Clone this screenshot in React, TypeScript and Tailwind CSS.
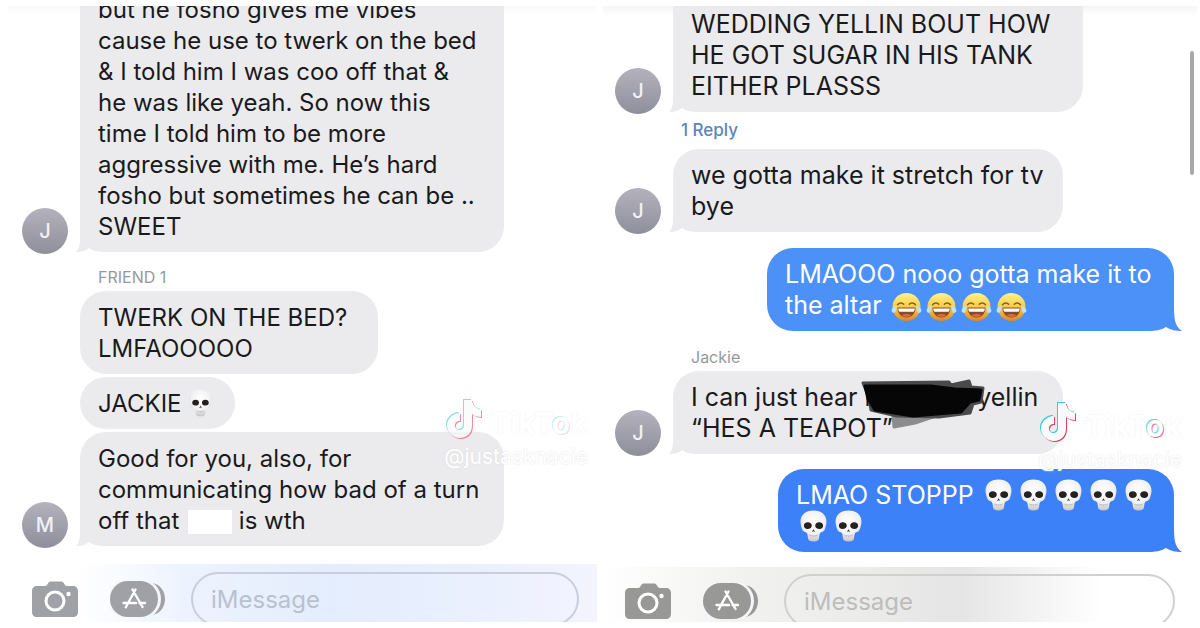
import type { ReactNode } from "react";

type IconProps = { className?: string };

function Skull({ className = "mx-[3px] h-8 w-[29px]" }: IconProps) {
  return (
    <svg viewBox="0 0 29 32" role="img" aria-label="skull" className={`-mt-2.5 -mb-1.5 inline-block align-middle ${className}`}>
      <defs>
        <radialGradient id="bone" cx="50%" cy="35%" r="65%">
          <stop offset="0" stopColor="#ffffff" />
          <stop offset="0.65" stopColor="#f1f1f3" />
          <stop offset="1" stopColor="#c3c4ca" />
        </radialGradient>
      </defs>
      <path
        d="M14.500 0.500C6.500.500 1.500 5 1.500 11.500c0 3 .8 4.800 1.200 6.500.5 2 1.300 3.300 3 3.900 1.700.5 2.400.9 2.700 2.400l.7 4.400c.3 1.700 1.700 2.800 5.400 2.800s5.100-1.100 5.400-2.800l.7-4.400c.3-1.500 1-1.900 2.700-2.400 1.700-.6 2.500-1.900 3-3.900.4-1.700 1.200-3.500 1.200-6.500 0-6.500-5-11-13-11Z"
        fill="url(#bone)"
      />
      <path d="M8.800 12.300c-2.500 0-3.900 1.500-3.900 3.500s1.300 3.200 3.600 3.200c2.600 0 4.300-1.100 4.300-3.400 0-2-1.500-3.300-4-3.300ZM20.200 12.300c2.500 0 3.900 1.500 3.900 3.500s-1.300 3.200-3.600 3.200c-2.600 0-4.300-1.100-4.300-3.400 0-2 1.500-3.300 4-3.300Z" fill="#25211f" />
      <path d="m14.500 19.300-1.600 2.600 1.600-.6 1.600.6Z" fill="#3b3230" />
      <path d="M10 25c2.800 1.100 6.200 1.100 9 0M12.200 25.600v1.600M14.500 26v1.600M16.800 25.600v1.600" fill="none" stroke="#b9b5b7" strokeWidth="0.7" />
    </svg>
  );
}

function Joy() {
  return (
    <svg viewBox="0 0 31 30" role="img" aria-label="tears of joy" className="-my-2 mx-0.5 inline-block h-[30px] w-[31px] align-middle">
      <defs>
        <linearGradient id="face" x1="0" y1="0" x2="0" y2="1">
          <stop offset="0" stopColor="#fff48a" />
          <stop offset="0.5" stopColor="#fbcb45" />
          <stop offset="1" stopColor="#dc8628" />
        </linearGradient>
      </defs>
      <circle cx="15.500" cy="15" r="14" fill="url(#face)" />
      <path d="M6.500 12.800c1.300-2.300 4.700-2.500 6.200-.6M18.300 12.200c1.500-1.900 4.900-1.700 6.200.6" fill="none" stroke="#8a5a22" strokeWidth="1.500" strokeLinecap="round" />
      <path d="M6.500 15.500h18c0 6-3.800 10-9 10s-9-4-9-10Z" fill="#8a4c22" />
      <path d="M7.300 16.500h16.400c0 1.800-.5 2.700-1.200 3.300h-14c-.7-.6-1.200-1.500-1.200-3.300Z" fill="#fff" />
      <path d="M10.500 23.200c3-1.600 7-1.600 10 0-3 2.300-7 2.300-10 0Z" fill="#d9694a" />
      <path d="M5.500 13.700C3.500 14 .6 16 .6 18.800c0 2 3 2.700 4 .7.7-1.400.9-3.700.9-5.800ZM25.500 13.700c2 .3 4.900 2.300 4.900 5.100 0 2-3 2.700-4 .7-.7-1.400-.9-3.700-.9-5.800Z" fill="#b9e4f8" />
    </svg>
  );
}

function Camera() {
  return (
    <svg viewBox="0 0 46 36" className="h-9 w-[46px]" aria-hidden="true">
      <path d="M5 5h8c1.500 0 2-.8 2.800-2.200C16.800 1 17.500.500 19.500.500h9c2 0 2.700.5 3.700 2.300C33 4.200 33.500 5 35 5h6c3 0 5 2 5 5v21c0 3-2 5-5 5H5c-3 0-5-2-5-5V10c0-3 2-5 5-5Z" fill="currentColor" />
      <circle cx="23" cy="20" r="9" fill="none" stroke="#fff" strokeWidth="3" />
      <circle cx="36.500" cy="13" r="2.200" fill="#fff" />
    </svg>
  );
}

function AppStore() {
  return (
    <svg viewBox="0 0 56 36" className="h-9 w-14" aria-hidden="true">
      <path d="M42 2c8 1 13 8 13 16s-5 15-13 16Z" fill="currentColor" />
      <rect x="-2" y="-2" width="53" height="40" rx="20" fill="#f4f6fa" />
      <rect width="48" height="36" rx="18" fill="currentColor" />
      <path d="m25.500 8.500-8.500 15.500M22.500 8.500l10 17.500M13.500 22h12.500M29.500 22h5.500M15.800 26.300l.8-1.400" fill="none" stroke="#fff" strokeWidth="2.400" strokeLinecap="round" />
    </svg>
  );
}

const NOTE =
  "M18 1h8c.5 5 4 9 9 9.500v7.500c-3.500 0-6.500-1-9-3V26c0 8-5 13-12 13S1 33 1 26.500 7 14 14 14v8c-3.500 0-5 2-5 4.500s2 4.500 4.500 4.500 4.500-2 4.500-5Z";

function Watermark({ className, faint }: { className: string; faint?: boolean }) {
  return (
    <div className={`pointer-events-none absolute flex flex-col gap-0.5 ${className}`}>
      <div className="flex items-end gap-2 pl-0.5">
        <svg viewBox="0 0 36 40" className={`h-10 w-9 overflow-visible ${faint ? "opacity-60" : ""}`} aria-hidden="true">
          <path d={NOTE} fill="#35cdd0" transform="translate(-1 -1)" />
          <path d={NOTE} fill="#e0425f" transform="translate(1 1)" />
          <path d={NOTE} fill="#fafafa" />
        </svg>
        <span className="text-3xl leading-8 font-bold text-white [text-shadow:0_0_2px_#ededed]">
          TikT
          <span className={faint ? "[text-shadow:-1px_-1px_0_#c5eeee,1px_1px_0_#eedde0]" : "[text-shadow:-1px_-1px_0_#58d5d6,1px_1px_0_#e2728a]"}>o</span>k
        </span>
      </div>
      <span className="text-[21px] leading-8 text-white [text-shadow:0_0_2px_#dcdcdc]">@justasknacie</span>
    </div>
  );
}

function IncomingTail() {
  return (
    <svg viewBox="0 0 32 24" className="absolute bottom-0 -left-1 h-6 w-8 text-[#ebebed]" aria-hidden="true">
      <path d="M4 0C4 12 5 19 0 24c6 0 9-1 13-4 4 3 9 4 19 4V0Z" fill="currentColor" />
    </svg>
  );
}

function OutgoingTail() {
  return (
    <svg viewBox="0 0 36 28" className="absolute -right-2 bottom-0 h-7 w-9" aria-hidden="true">
      <path d="M28 0c0 14 0 23 8 28-7 0-11-1-16-4-5 3-10 4-20 4V0Z" fill="currentColor" />
    </svg>
  );
}

function Avatar({ letter }: { letter: string }) {
  return (
    <span className="-mb-0.5 flex h-[46px] w-[46px] shrink-0 items-center justify-center rounded-full bg-gradient-to-b from-[#b3b2bd] to-[#8f8f9b] text-xl font-medium text-[#f1f1f5]">
      {letter}
    </span>
  );
}

type IncomingProps = { letter?: string; width: string; corners?: string; children: ReactNode };

function Incoming({ letter, width, corners = "rounded-[26px]", children }: IncomingProps) {
  return (
    <div className="flex shrink-0 items-end gap-3">
      {letter ? <Avatar letter={letter} /> : <span className="w-[46px] shrink-0" />}
      <div className={`relative bg-[#ebebed] px-[18px] pt-[11px] pb-2.5 whitespace-nowrap text-[#1a1a1c] ${corners} ${width}`}>
        {letter && <IncomingTail />}
        <p className="relative">{children}</p>
      </div>
    </div>
  );
}

function Outgoing({ tone, width, children }: { tone: string; width: string; children: ReactNode }) {
  return (
    <div className={`relative mr-[11px] shrink-0 self-end rounded-[26px] bg-current px-[18px] pt-[11px] pb-2.5 whitespace-nowrap ${tone} ${width}`}>
      <OutgoingTail />
      <p className="relative text-white">{children}</p>
    </div>
  );
}

function Composer({ className, field }: { className: string; field: string }) {
  return (
    <form className={`flex shrink-0 items-start overflow-hidden ${className}`}>
      <button type="button" aria-label="Camera" className="mt-[9px] mr-8 shrink-0">
        <Camera />
      </button>
      <button type="button" aria-label="Apps" className="mt-[9px] mr-[25px] shrink-0">
        <AppStore />
      </button>
      <input
        aria-label="iMessage"
        placeholder="iMessage"
        className={`h-[54px] min-w-0 flex-1 rounded-full border-2 bg-transparent px-[18px] text-2xl outline-none ${field}`}
      />
    </form>
  );
}

function LeftChat() {
  return (
    <section className="relative flex min-h-0 flex-col overflow-hidden text-2xl leading-[31px]">
      <div className="flex min-h-0 flex-1 flex-col justify-end overflow-hidden bg-[linear-gradient(#fafafa,#fff_10px)] pb-[18px] pl-3.5">
        <Incoming letter="J" width="w-[424px]">
          but he fosho gives me vibes
          <br />
          cause he use to twerk on the bed
          <br />
          &amp; I told him I was coo off that &amp;
          <br />
          he was like yeah. So now this
          <br />
          time I told him to be more
          <br />
          aggressive with me. He’s hard
          <br />
          fosho but sometimes he can be ..
          <br />
          SWEET
        </Incoming>
        <span className="shrink-0 pt-[15px] pb-1 pl-[76px] text-base leading-5 text-[#98989c]">FRIEND 1</span>
        <div className="flex shrink-0 flex-col gap-[3px]">
          <Incoming width="w-[298px]">
            TWERK ON THE BED?
            <br />
            LMFAOOOOO
          </Incoming>
          <Incoming width="w-[155px]">
            JACKIE
            <Skull className="ml-1.5 h-7 w-[25px]" />
          </Incoming>
          <Incoming letter="M" width="w-[424px]">
            Good for you, also, for
            <br />
            communicating how bad of a turn
            <br />
            off that <span className="-my-2 ml-0.5 inline-block h-6 w-11 bg-white align-middle" /> is wth
          </Incoming>
        </div>
      </div>
      <Watermark className="right-[9px] bottom-[149px]" faint />
      <Composer
        className="h-[58px] bg-[linear-gradient(90deg,#fff_12%,#edf3fe_30%,#e4edfd_55%,#eaf0fe_80%,#f3f4fe)] pt-2 pr-[18px] pl-6 text-[#a0a1a6]"
        field="border-[#c8cedb] placeholder:text-[#b9c1cf]"
      />
    </section>
  );
}

function RightChat() {
  return (
    <section className="relative flex min-h-0 flex-col overflow-hidden text-[25px] leading-[31px]">
      <div className="flex min-h-0 flex-1 flex-col justify-end overflow-hidden bg-[linear-gradient(#f5f5f5,#fff_10px)] pr-3 pb-[15px] pl-3">
        <Incoming letter="J" width="w-[410px]" corners="rounded-b-[26px]">
          WEDDING YELLIN BOUT HOW
          <br />
          HE GOT SUGAR IN HIS TANK
          <br />
          EITHER PLASSS
        </Incoming>
        <button type="button" className="mt-2 mb-[9px] ml-[66px] shrink-0 self-start text-[17px] leading-5 font-medium text-[#5687bd]">
          1 Reply
        </button>
        <Incoming letter="J" width="w-[390px]">
          we gotta make it stretch for tv
          <br />
          bye
        </Incoming>
        <div className="h-4 shrink-0" />
        <Outgoing tone="text-[#4b91f8]" width="w-[407px]">
          LMAOOO nooo gotta make it to
          <br />
          the altar <Joy />
          <Joy />
          <Joy />
          <Joy />
        </Outgoing>
        <span className="shrink-0 pt-4 pb-1 pl-[76px] text-base leading-5 text-[#98989c]">Jackie</span>
        <Incoming letter="J" width="w-[390px]">
          I can just hear h
          <span className="relative inline-block w-[98px]">
            <svg viewBox="0 0 126 50" className="absolute -top-6 -left-4 h-[50px] w-[126px] overflow-visible" aria-hidden="true">
              <g strokeLinejoin="round" strokeWidth="3">
                <path d="M30 34 76 33 52 41 31 45Z" fill="#8c8c8f" stroke="#8c8c8f" />
                <path d="M0 1 86 0 88 3 106-1 108 5 120 6 118 20 110 22 107 31 76 35 34 34 8 28 6 16Z" fill="#4a4a4c" stroke="#4a4a4c" />
                <path d="M2 4 68 4 92 7 118 8 116 18 107 20 98 30 50 34 12 28 5 17Z" fill="#060606" stroke="#060606" />
              </g>
            </svg>
          </span>
          yellin
          <br />
          “HES A TEAPOT”
        </Incoming>
        <div className="h-[15px] shrink-0" />
        <Outgoing tone="text-[#3c81f8]" width="w-[396px]">
          LMAO STOPPP <Skull />
          <Skull />
          <Skull />
          <Skull />
          <Skull />
          <br />
          <Skull />
          <Skull />
        </Outgoing>
      </div>
      <div className="absolute top-[45px] right-[3px] h-[124px] w-1 rounded-full bg-[#a8a8ab]" />
      <Watermark className="right-[15px] bottom-[146px]" />
      <Composer
        className="h-[55px] bg-[linear-gradient(90deg,#fff,#f1f1ef_25%,#ebebea_45%,#e5e5e5_60%,#fff_84%)] pt-[7px] pr-[22px] pl-[22px] text-[#989996]"
        field="border-[#d0d0cf] placeholder:text-[#bdbdbc]"
      />
    </section>
  );
}

export default function App() {
  return (
    <main className="grid h-screen grid-cols-[589fr_594fr] grid-rows-[minmax(0,1fr)] gap-1.5 overflow-hidden bg-white py-1.5 pr-[3px] pl-2 font-[Inter,'Liberation_Sans',sans-serif]">
      <LeftChat />
      <RightChat />
    </main>
  );
}
